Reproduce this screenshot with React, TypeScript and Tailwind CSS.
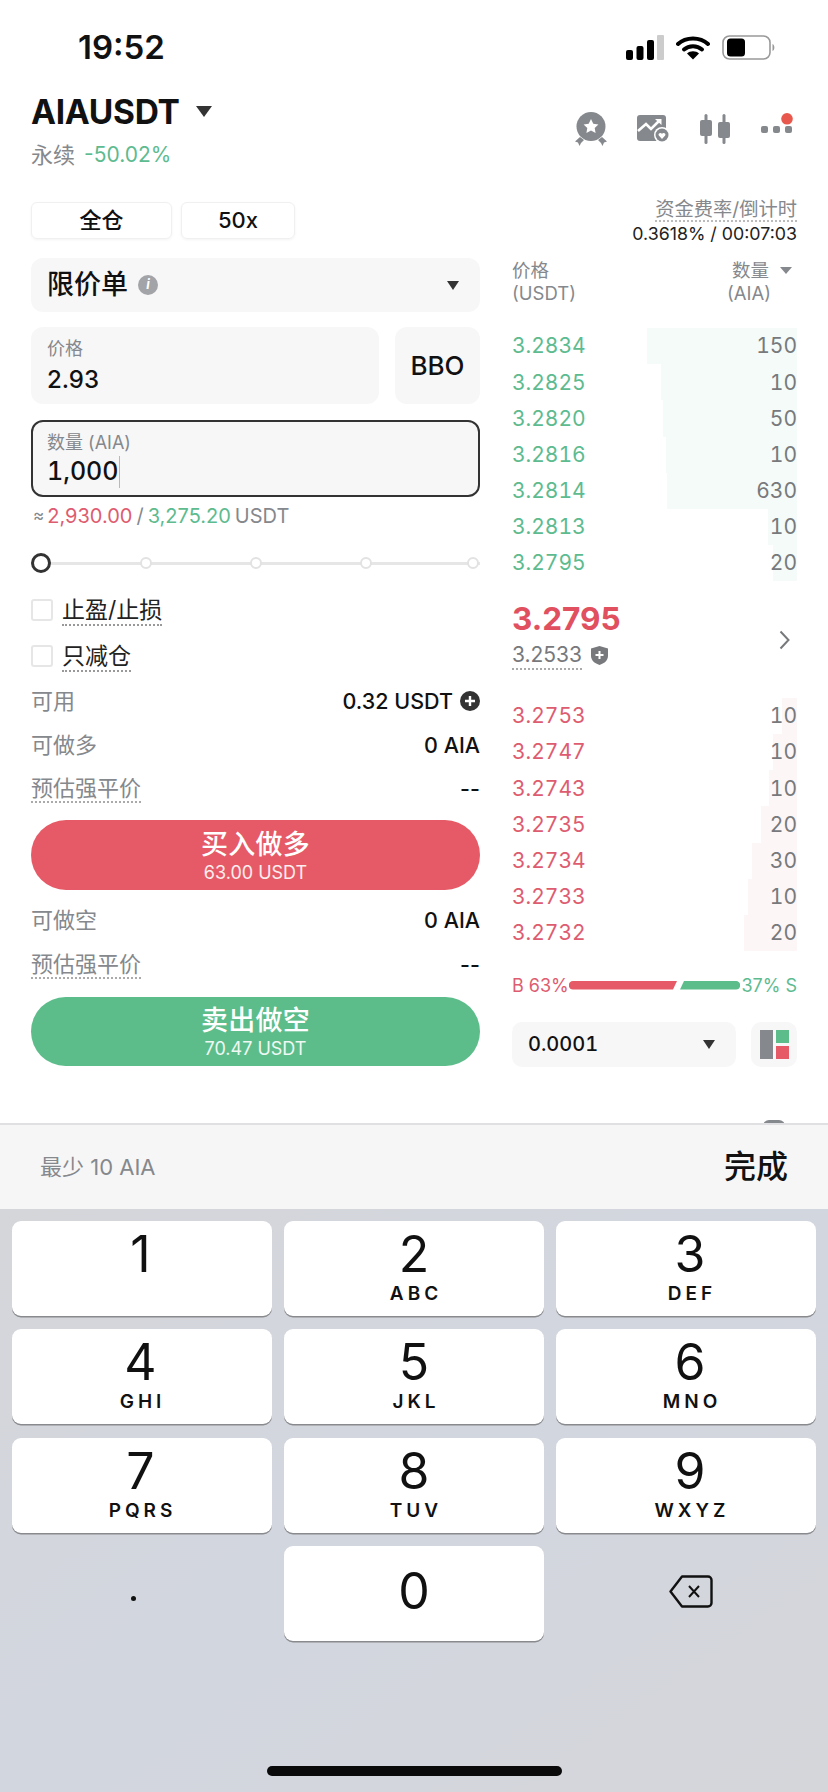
import React from 'react';

const GREEN = '#5dbb8f';

const bids = [
  { price: '3.2834', qty: '150', depth: 150 },
  { price: '3.2825', qty: '10', depth: 136 },
  { price: '3.2820', qty: '50', depth: 134 },
  { price: '3.2816', qty: '10', depth: 131 },
  { price: '3.2814', qty: '630', depth: 130 },
  { price: '3.2813', qty: '10', depth: 29 },
  { price: '3.2795', qty: '20', depth: 24 },
];

const asks = [
  { price: '3.2753', qty: '10', depth: 15 },
  { price: '3.2747', qty: '10', depth: 24 },
  { price: '3.2743', qty: '10', depth: 28 },
  { price: '3.2735', qty: '20', depth: 36 },
  { price: '3.2734', qty: '30', depth: 45 },
  { price: '3.2733', qty: '10', depth: 49 },
  { price: '3.2732', qty: '20', depth: 53 },
];

const keys = [
  ['1', ''],
  ['2', 'ABC'],
  ['3', 'DEF'],
  ['4', 'GHI'],
  ['5', 'JKL'],
  ['6', 'MNO'],
  ['7', 'PQRS'],
  ['8', 'TUV'],
  ['9', 'WXYZ'],
];

function Caret({ className = '' }: { className?: string }) {
  return <div className={`w-0 h-0 border-x-[6px] border-x-transparent border-t-[9px] border-t-[#333] ${className}`} />;
}

function StatusBar() {
  return (
    <div className="h-[92px] shrink-0 flex items-center justify-between pl-[78px] pr-[52px] pt-[2px]">
      <span className="text-[33px] font-semibold text-[#111] leading-none">19:52</span>
      <div className="flex items-center gap-[12px]">
        <svg width="38" height="25" viewBox="0 0 38 25">
          <rect x="0" y="15" width="7" height="10" rx="2" fill="#000" />
          <rect x="10.5" y="11" width="7" height="14" rx="2" fill="#000" />
          <rect x="21" y="5" width="7" height="20" rx="2" fill="#000" />
          <rect x="31" y="0" width="7" height="25" rx="1" fill="#ccc" />
        </svg>
        <svg width="34" height="25" viewBox="0 0 34 25" fill="none">
          <path d="M2 9 C10 1.5 24 1.5 32 9" stroke="#000" strokeWidth="4" strokeLinecap="round" />
          <path d="M8 14.5 C13 10 21 10 26 14.5" stroke="#000" strokeWidth="4" strokeLinecap="round" />
          <path d="M17 24.5 L11 18.5 C14 15.6 20 15.6 23 18.5 Z" fill="#000" />
        </svg>
        <svg width="54" height="25" viewBox="0 0 54 25" fill="none">
          <rect x="1" y="1" width="47" height="23" rx="6.5" stroke="#999" strokeWidth="1.6" />
          <rect x="5" y="3.5" width="18" height="18" rx="3.5" fill="#000" />
          <path d="M50.5 9 C53 10 53 15 50.5 16 Z" fill="#999" />
        </svg>
      </div>
    </div>
  );
}

function HeaderIcons() {
  return (
    <div className="flex items-center gap-[30px] mt-[20px] h-[34px]">
      <svg width="32" height="34" viewBox="0 0 32 34">
        <circle cx="16" cy="14.5" r="14.5" fill="#85888c" />
        <path d="M16 7 L18.3 11.8 L23.4 12.5 L19.7 16 L20.6 21 L16 18.6 L11.4 21 L12.3 16 L8.6 12.5 L13.7 11.8 Z" fill="#fff" />
        <path d="M5 25 L9 28 L6 31 L4.5 34 L3 30.5 L0 29.5 Z" fill="#85888c" />
        <path d="M27 25 L23 28 L26 31 L27.5 34 L29 30.5 L32 29.5 Z" fill="#85888c" />
      </svg>
      <svg width="33" height="28" viewBox="0 0 33 28">
        <rect x="0" y="0" width="29" height="26" rx="3" fill="#85888c" />
        <path d="M1 16 L9 9 L14 14 L23 5" stroke="#fff" strokeWidth="2.6" fill="none" />
        <path d="M18 4 H24.5 V10 Z" fill="#fff" />
        <circle cx="25" cy="20" r="8" fill="#fff" />
        <circle cx="25" cy="20" r="6.5" fill="#85888c" />
        <path d="M25 24 L21.8 20.5 C20.6 18.6 23.6 16.8 25 18.8 C26.4 16.8 29.4 18.6 28.2 20.5 Z" fill="#fff" />
      </svg>
      <svg width="31" height="30" viewBox="0 0 31 30" fill="#85888c">
        <rect x="0" y="6" width="12" height="16" rx="2" />
        <rect x="4.5" y="0" width="3" height="30" rx="1.5" />
        <rect x="18" y="8" width="12" height="16" rx="2" />
        <rect x="22.5" y="0" width="3" height="30" rx="1.5" />
      </svg>
      <svg width="32" height="32" viewBox="0 0 32 32">
        <rect x="0" y="13" width="7" height="7" rx="2" fill="#85888c" />
        <rect x="12" y="13" width="7" height="7" rx="2" fill="#85888c" />
        <rect x="24" y="13" width="7" height="7" rx="2" fill="#85888c" />
        <circle cx="26" cy="5.8" r="5.8" fill="#e8584c" />
      </svg>
    </div>
  );
}

function Header() {
  return (
    <div className="h-[104px] shrink-0 pl-[31px] pr-[35px] flex justify-between items-start">
      <div className="pt-[2px]">
        <div className="flex items-center h-[38px]">
          <span className="text-[33.5px] font-bold text-[#111] leading-none tracking-[-0.3px]">AIAUSDT</span>
          <Caret className="ml-[16px] mb-[4px] border-x-[8px] border-t-[11px]" />
        </div>
        <div className="flex items-center mt-[6px] h-[34px]">
          <span className="text-[22px] text-[#85888c]">永续</span>
          <span className="text-[21px] ml-[9px]" style={{ color: GREEN }}>-50.02%</span>
        </div>
      </div>
      <HeaderIcons />
    </div>
  );
}

function Row({ label, dotted, children }: { label: string; dotted?: boolean; children: React.ReactNode }) {
  return (
    <div className="h-[30px] flex items-center justify-between">
      <span className={`text-[22px] leading-[26px] text-[#85888c] ${dotted ? 'border-b-2 border-dotted border-[#aaa]' : ''}`}>{label}</span>
      <div className="flex items-center text-[21.5px] font-medium text-[#111]">{children}</div>
    </div>
  );
}

function Check({ label }: { label: string }) {
  return (
    <div className="flex items-center gap-[9px] h-[22px]">
      <div className="w-[22px] h-[22px] rounded-[3px] border-2 border-[#e6e6e6] bg-white" />
      <span className="text-[23px] leading-[27px] text-[#222] border-b-2 border-dotted border-[#999] mt-[3px]">{label}</span>
    </div>
  );
}

function Slider() {
  return (
    <div className="relative h-[20px] flex items-center">
      <div className="absolute left-0 right-0 h-[3px] bg-[#e6e6e6]" />
      <div className="relative w-[20px] h-[20px] rounded-full border-[3px] border-[#333] bg-white" />
      <div className="relative ml-[89px] w-[12px] h-[12px] rounded-full border-2 border-[#e2e2e2] bg-white" />
      <div className="relative ml-[98px] w-[12px] h-[12px] rounded-full border-2 border-[#e2e2e2] bg-white" />
      <div className="relative ml-[98px] w-[12px] h-[12px] rounded-full border-2 border-[#e2e2e2] bg-white" />
      <div className="relative ml-[95px] w-[12px] h-[12px] rounded-full border-2 border-[#e2e2e2] bg-white" />
    </div>
  );
}

function OrderForm() {
  return (
    <div className="w-[449px] flex flex-col pt-[6px]">
      <div className="flex gap-[9px] h-[37px]">
        <div className="w-[141px] rounded-[6px] border border-[#f0f0f0] shadow-[0_1px_3px_rgba(0,0,0,0.05)] flex items-center justify-center text-[22px] font-medium text-[#111]">全仓</div>
        <div className="w-[114px] rounded-[6px] border border-[#f0f0f0] shadow-[0_1px_3px_rgba(0,0,0,0.05)] flex items-center justify-center text-[22px] font-medium text-[#111]">50x</div>
      </div>

      <div className="mt-[19px] h-[54px] rounded-[12px] bg-[#f7f7f8] flex items-center pl-[16px] pr-[21px]">
        <span className="text-[27px] font-medium text-[#111]">限价单</span>
        <div className="ml-[10px] w-[20px] h-[20px] rounded-full bg-[#a2a4a7] flex items-center justify-center text-[13px] italic font-bold text-white">i</div>
        <Caret className="ml-auto" />
      </div>

      <div className="mt-[15px] flex gap-[16px] h-[77px]">
        <div className="flex-1 rounded-[12px] bg-[#f7f7f8] pl-[16px] pt-[10px]">
          <div className="text-[18px] leading-[24px] text-[#85888c]">价格</div>
          <div className="text-[24px] leading-[30px] font-medium text-[#111] mt-[4px]">2.93</div>
        </div>
        <div className="w-[85px] rounded-[12px] bg-[#f7f7f8] flex items-center justify-center text-[26px] font-medium text-[#111]">BBO</div>
      </div>

      <div className="mt-[16px] h-[77px] rounded-[12px] bg-[#f7f7f8] border-2 border-[#333] pl-[14px] pt-[9px]">
        <div className="text-[18px] leading-[24px] text-[#85888c]">数量 (AIA)</div>
        <div className="flex items-center mt-[1px] h-[32px]">
          <span className="text-[25px] font-medium text-[#111] tabular-nums">1,000</span>
          <div className="w-[1px] h-[32px] bg-[#a9b8e6]" />
        </div>
      </div>

      <div className="mt-[7px] h-[24px] flex items-center text-[20px] text-[#85888c] pl-[2px]">
        <span className="mr-[3px] text-[17px]">≈</span>
        <span className="text-[#de5c70]">2,930.00</span>
        <span className="mx-[4px]">/</span>
        <span style={{ color: GREEN }}>3,275.20</span>
        <span className="ml-[4px]">USDT</span>
      </div>

      <div className="mt-[25px]"><Slider /></div>
      <div className="mt-[26px]"><Check label="止盈/止损" /></div>
      <div className="mt-[24px]"><Check label="只减仓" /></div>

      <div className="mt-[19px]">
        <Row label="可用">
          0.32 USDT
          <span className="ml-[7px] w-[20px] h-[20px] rounded-full bg-[#333] flex items-center justify-center">
            <svg width="12" height="12" viewBox="0 0 12 12"><path d="M6 1v10M1 6h10" stroke="#fff" strokeWidth="2.4" /></svg>
          </span>
        </Row>
      </div>
      <div className="mt-[14px]"><Row label="可做多">0 AIA</Row></div>
      <div className="mt-[14px]"><Row label="预估强平价" dotted>--</Row></div>

      <div className="mt-[16px] h-[70px] rounded-full bg-[#e55a66] flex flex-col items-center justify-center text-white pt-[2px]">
        <span className="text-[27px] leading-[32px] font-medium tracking-[0.3px]">买入做多</span>
        <span className="text-[18px] leading-[23px] text-white/90">63.00 USDT</span>
      </div>

      <div className="mt-[15px]"><Row label="可做空">0 AIA</Row></div>
      <div className="mt-[15px]"><Row label="预估强平价" dotted>--</Row></div>

      <div className="mt-[17px] h-[69px] rounded-full bg-[#5cbd8a] flex flex-col items-center justify-center text-white pt-[1px]">
        <span className="text-[27px] leading-[32px] font-medium tracking-[0.3px]">卖出做空</span>
        <span className="text-[18px] leading-[23px] text-white/90">70.47 USDT</span>
      </div>
    </div>
  );
}

function BookRow({ price, qty, depth, up }: { price: string; qty: string; depth: number; up: boolean }) {
  return (
    <div className="relative h-[36.2px] flex items-center justify-between text-[21px] tabular-nums">
      <div
        className={`absolute right-0 top-0 bottom-0 ${up ? 'bg-[#f4fbf8]' : 'bg-[#fdf6f6]'}`}
        style={{ width: depth }}
      />
      <span className={`relative ${up ? 'text-[#5dbb8f]' : 'text-[#de5c70]'}`}>{price}</span>
      <span className="relative text-[#77797c]">{qty}</span>
    </div>
  );
}

function OrderBook() {
  return (
    <div className="w-[285px] flex flex-col pt-[2px]">
      <div className="h-[58px] flex flex-col items-end">
        <span className="text-[19.25px] leading-[22px] text-[#85888c] border-b-2 border-dotted border-[#bbb]">资金费率/倒计时</span>
        <span className="text-[17.8px] leading-[22px] mt-[1px] text-[#222] whitespace-nowrap">0.3618% / 00:07:03</span>
      </div>
      <div className="h-[72px] flex justify-between text-[18.5px] leading-[23px] text-[#85888c] pt-[3px]">
        <div>
          <div>价格</div>
          <div>(USDT)</div>
        </div>
        <div className="pr-[5px]">
          <div className="flex items-center">
            <span>数量</span>
            <div className="ml-[11px] w-0 h-0 border-x-[6px] border-x-transparent border-t-[7px] border-t-[#85888c]" />
          </div>
          <div className="-ml-[5px]">(AIA)</div>
        </div>
      </div>
      {bids.map((b) => <BookRow key={b.price} {...b} up />)}
      <div className="h-[116.6px] flex items-center justify-between pr-[7px]">
        <div className="flex flex-col -mt-[10px]">
          <span className="text-[31.5px] leading-[38px] font-bold text-[#e0505f]">3.2795</span>
          <div className="flex items-center mt-[4px]">
            <span className="text-[21px] leading-[26px] text-[#77797c] border-b-2 border-dotted border-[#aaa]">3.2533</span>
            <svg className="ml-[9px]" width="17" height="19" viewBox="0 0 17 19">
              <path d="M8.5 0 L17 2.5 V10 C17 14.5 13 17.5 8.5 19 C4 17.5 0 14.5 0 10 V2.5 Z" fill="#77797c" />
              <path d="M8.5 5v8M4.5 9h8" stroke="#fff" strokeWidth="2" />
            </svg>
          </div>
        </div>
        <svg width="11" height="20" viewBox="0 0 11 20" fill="none">
          <path d="M1.5 1.5 L9.5 10 L1.5 18.5" stroke="#77797c" strokeWidth="2" />
        </svg>
      </div>
      {asks.map((a) => <BookRow key={a.price} {...a} up={false} />)}
      <div className="mt-[22.6px] h-[24px] flex items-center justify-between text-[18px] whitespace-nowrap">
        <span className="text-[#de5c70] w-[56px]">B 63%</span>
        <svg className="shrink-0" width="171" height="9" viewBox="0 0 171 9">
          <path d="M4 0 H108 L104 8.5 H4 A4 4 0 0 1 4 0 Z" fill="#e55a66" />
          <path d="M115 0 H167 A4 4 0 0 1 167 8.5 H111 Z" fill="#5cbd8a" />
        </svg>
        <span style={{ color: GREEN }}>37% S</span>
      </div>
      <div className="mt-[24px] flex gap-[15px] h-[45px]">
        <div className="w-[224px] rounded-[10px] bg-[#f7f7f8] flex items-center justify-between pl-[16px] pr-[21px]">
          <span className="text-[20px] font-medium text-[#111] tabular-nums">0.0001</span>
          <Caret />
        </div>
        <div className="flex-1 rounded-[10px] bg-[#f7f7f8] flex items-center justify-center">
          <svg width="29" height="29" viewBox="0 0 29 29">
            <rect x="0" y="0" width="13" height="29" fill="#85888c" />
            <rect x="16" y="0" width="13" height="13" fill="#5cbd8a" />
            <rect x="16" y="16" width="13" height="13" fill="#e55a66" />
          </svg>
        </div>
      </div>
    </div>
  );
}

function Toolbar() {
  return (
    <div className="h-[86px] shrink-0 border-t-2 border-[#e0e0e2] bg-[#f6f6f7] flex items-center justify-between pl-[40px] pr-[40px]">
      <span className="text-[22px] text-[#85888c]">最少 10 AIA</span>
      <span className="text-[32px] font-medium text-[#111]">完成</span>
    </div>
  );
}

function Keyboard() {
  return (
    <div className="flex-1 bg-gradient-to-br from-[#d5d6da] via-[#d2d6df] to-[#d5d6da] pt-[12px] px-[12px] relative">
      <div className="grid grid-cols-3 gap-x-[12px] gap-y-[13.3px]">
        {keys.map(([digit, letters], i) => (
          <div
            key={digit}
            className={`h-[95px] rounded-[9px] bg-white shadow-[0_1.5px_0_#898a8e] flex flex-col items-center pt-[8px] text-[#111] ${i % 3 === 2 ? 'pl-[8px]' : i % 3 === 0 ? 'pr-[3px]' : ''}`}
          >
            <span className="text-[50px] leading-[50px]">{digit}</span>
            {letters && <span className="mt-[5px] text-[19px] leading-[20px] font-semibold tracking-[4px] pl-[4px]">{letters}</span>}
          </div>
        ))}
        <div className="h-[95px] flex items-center">
          <div className="w-[5px] h-[5px] rounded-full bg-[#111] ml-[119px] mt-[10px]" />
        </div>
        <div className="h-[95px] rounded-[9px] bg-white shadow-[0_1.5px_0_#898a8e] flex items-center justify-center text-[50px] leading-[50px] text-[#111] pb-[5px]">0</div>
        <div className="h-[95px] flex items-center justify-center pb-[4px] pl-[10px]">
          <svg width="44" height="33" viewBox="0 0 44 33" fill="none">
            <path d="M13 1.5 H39 A3.5 3.5 0 0 1 42.5 5 V28 A3.5 3.5 0 0 1 39 31.5 H13 L1.5 16.5 Z" stroke="#111" strokeWidth="2.4" strokeLinejoin="round" />
            <path d="M20 11 L30 22 M30 11 L20 22" stroke="#111" strokeWidth="2" />
          </svg>
        </div>
      </div>
      <div className="absolute left-[267px] top-[557px] w-[295px] h-[10px] rounded-full bg-[#0a0a0a]" />
    </div>
  );
}

export default function App() {
  return (
    <div className="w-[828px] h-[1792px] flex flex-col overflow-hidden bg-white font-['Inter','Noto_Sans_CJK_SC',sans-serif]">
      <div className="h-[1123px] shrink-0 overflow-hidden flex flex-col">
        <StatusBar />
        <Header />
        <div className="flex gap-[32px] pl-[31px]">
          <OrderForm />
          <OrderBook />
        </div>
        <div className="mt-[53px] flex justify-end pr-[43px]">
          <div className="w-[22px] h-[10px] rounded-t-[6px] bg-[#85888c]" />
        </div>
      </div>
      <Toolbar />
      <Keyboard />
    </div>
  );
}
